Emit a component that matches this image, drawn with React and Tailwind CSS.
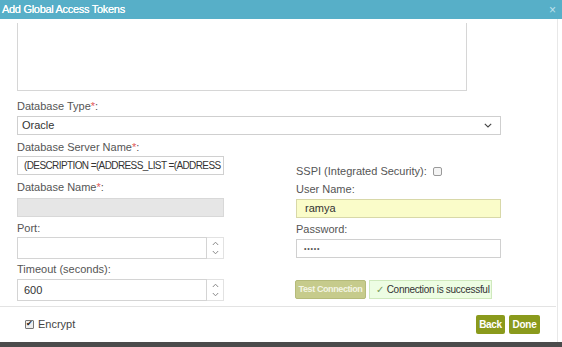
import React from 'react';

const font = { fontFamily: '"Liberation Sans", Arial, sans-serif' };

const Label = ({ children, req, className = '' }) => (
  <div className={`text-[11px] leading-[13px] text-[#555] ${className}`}>
    {children}
    {req && <span className="text-[#e05a5a]">*</span>}
    :
  </div>
);

const Chevron = ({ up }) => (
  <svg width="7" height="5" viewBox="0 0 7 5" className="block">
    <path d={up ? 'M0.8 4 L3.5 1.2 L6.2 4' : 'M0.8 1 L3.5 3.8 L6.2 1'} fill="none" stroke="#8a8a8a" strokeWidth="1" />
  </svg>
);

const NumberInput = ({ value }) => (
  <div className="flex h-[22px] w-[207px]">
    <div className="flex-1 border border-[#d4d4d4] px-[6px] text-[11px] leading-[20px] text-[#333]">{value}</div>
    <div className="flex w-[17px] flex-col items-center justify-center gap-[4px] border border-l-0 border-[#e2e2e2]">
      <Chevron up />
      <Chevron />
    </div>
  </div>
);

export default function App() {
  return (
    <div className="relative h-[347px] w-[562px] overflow-hidden bg-white" style={font}>
      <div className="flex h-[19px] items-center justify-between bg-[#57afc8] pl-[2px] pr-[6px]">
        <span className="text-[11px] tracking-[-0.3px] text-white [text-shadow:0_0_0.4px_#fff]">Add Global Access Tokens</span>
        <span className="text-[12px] leading-none text-[#bfe2ec]">×</span>
      </div>

      <div className="px-[17px] pt-[4px]">
        <div className="h-[68px] w-[450px] border border-t-0 border-[#d6d6d6]" />

        <Label req className="mt-[9px]">Database Type</Label>
        <div className="mt-[3px] flex h-[19px] w-[484px] items-center justify-between border border-[#cfcfcf] pl-[4px] pr-[8px] text-[11px] text-[#333]">
          <span>Oracle</span>
          <svg width="8" height="5" viewBox="0 0 8 5">
            <path d="M0.8 0.8 L4 4 L7.2 0.8" fill="none" stroke="#444" strokeWidth="1.1" />
          </svg>
        </div>

        <div className="flex">
          <div className="w-[279px]">
            <Label req className="mt-[6px]">Database Server Name</Label>
            <div className="mt-[2px] h-[19px] w-[207px] overflow-hidden whitespace-nowrap border border-[#d0d0d0] pl-[6px] text-[10px] leading-[17px] tracking-[-0.6px] text-[#333]">
              (DESCRIPTION =(ADDRESS_LIST =(ADDRESS
            </div>

            <Label req className="mt-[6px]">Database Name</Label>
            <div className="mt-[4px] h-[19px] w-[207px] border border-[#d8d8d8] bg-[#e6e6e6]" />

            <Label className="mt-[5px]">Port</Label>
            <div className="mt-[2px]">
              <NumberInput value="" />
            </div>

            <Label className="mt-[4px]">Timeout (seconds)</Label>
            <div className="mt-[3px]">
              <NumberInput value="600" />
            </div>
          </div>

          <div className="w-[205px]">
            <div className="mt-[30px] flex items-center gap-[6px]">
              <span className="text-[11px] leading-[13px] text-[#555]">SSPI (Integrated Security):</span>
              <span className="h-[9px] w-[9px] rounded-[2px] border border-[#9a9a9a] bg-[#f4f4f4]" />
            </div>
            <Label className="mt-[5px]">User Name</Label>
            <div className="mt-[3px] h-[19px] w-[205px] border border-[#d8d8a8] bg-[#fafcc9] pl-[8px] text-[11px] leading-[17px] text-[#333]">
              ramya
            </div>
            <Label className="mt-[5px]">Password</Label>
            <div className="mt-[3px] h-[19px] w-[205px] border border-[#d0d0d0] pl-[7px] text-[7px] leading-[17px] tracking-[0.8px] text-[#555]">
              •••••
            </div>
            <div className="mt-[22px] -ml-[1px] flex items-center gap-[3px]">
              <div className="flex h-[19px] w-[71px] items-center justify-center whitespace-nowrap rounded-[2px] border border-[#b5bb7a] bg-[#c6cb8c] text-[9px] font-bold tracking-[-0.4px] text-[#f3f5e4]">
                Test Connection
              </div>
              <div className="flex h-[19px] w-[123px] items-center whitespace-nowrap border border-[#cfe9bd] bg-[#edfde3] pl-[6px] text-[10px] tracking-[-0.3px] text-[#333]">
                <span className="mr-[3px] text-[#7a9a5a]">✓</span>Connection is successful
              </div>
            </div>
          </div>
        </div>
      </div>

      <div className="mt-[5px] w-[556px] border-t border-[#e3e3e3]" />

      <div className="flex h-[34px] w-[556px] items-center justify-between pl-[25px] pr-[16px]">
        <div className="flex items-center gap-[4px] text-[11px] text-[#444]">
          <span className="flex h-[9px] w-[9px] items-center justify-center rounded-[1px] border border-[#777] bg-[#eee] text-[8px] leading-none text-[#222]">✔</span>
          Encrypt
        </div>
        <div className="flex gap-[4px]">
          <div className="flex h-[19px] w-[29px] items-center justify-center rounded-[2px] bg-[#8a9a1c] text-[10px] font-bold tracking-[-0.3px] text-white">Back</div>
          <div className="flex h-[19px] w-[31px] items-center justify-center rounded-[2px] bg-[#8a9a1c] text-[10px] font-bold tracking-[-0.3px] text-white">Done</div>
        </div>
      </div>

      <div className="absolute bottom-0 left-0 h-[5px] w-full bg-[#4b4b4b]" />
      <div className="absolute right-[4px] top-[19px] h-[323px] w-[1px] bg-[#e8e8e8]" />
    </div>
  );
}
